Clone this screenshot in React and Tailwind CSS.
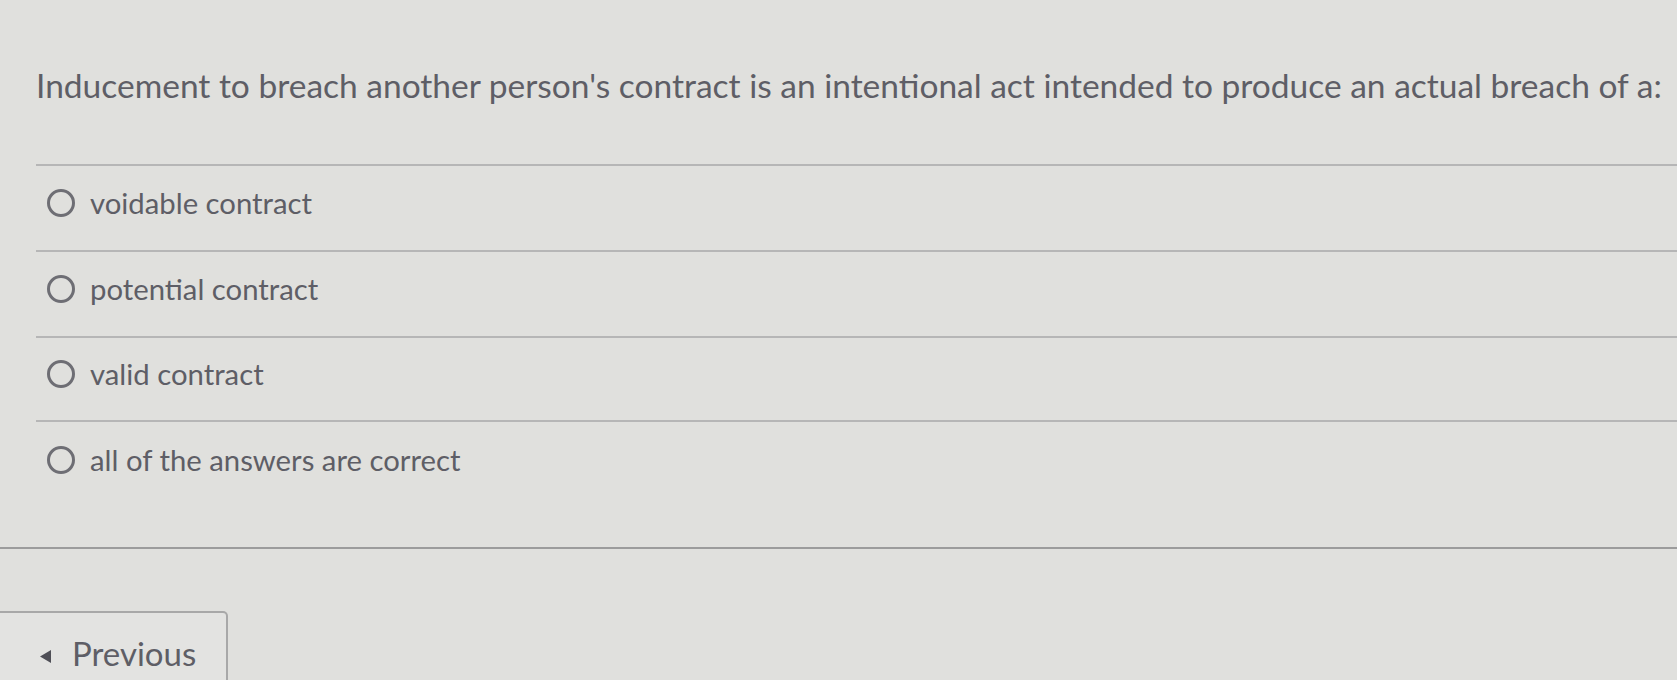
export default function App() {
  const options = [
    'voidable contract',
    'potential contract',
    'valid contract',
    'all of the answers are correct',
  ];

  return (
    <div className="w-[1677px] h-[680px] overflow-hidden bg-[#e0e0dd] text-[#5e5e66] font-['Lato','Open_Sans',sans-serif]">
      <div className="pl-[36px]">
        <p className="pt-[67px] h-[164px] text-[33.5px] leading-[36px] whitespace-nowrap">
          Inducement to breach another person's contract is an intentional act intended to produce an actual breach of a:
        </p>
        {options.map((opt, i) => (
          <label
            key={opt}
            className={`flex items-center pb-[10px] border-t-2 border-[#b6b6b6] ${i === 3 ? 'h-[88px]' : i === 2 ? 'h-[84px]' : 'h-[86px]'}`}
          >
            <span className="ml-[11px] w-[28px] h-[28px] rounded-full border-[3px] border-[#6e6e74] shrink-0" />
            <span className="ml-[15px] text-[29.3px]">{opt}</span>
          </label>
        ))}
      </div>
      <div className="mt-[39px] border-t-2 border-[#9c9c9c]" />
      <div className="pt-[62px]">
        <button className="flex items-center w-[228px] h-[80px] pl-[40px] pt-[10px] border-2 border-l-0 border-[#a8a8a8] rounded-tr-[5px] bg-[#e3e3e1] text-[#5e5e66]">
          <svg width="11" height="13" viewBox="0 0 11 13" className="shrink-0">
            <path d="M11 0 L0 6.5 L11 13 Z" fill="#4f4f56" />
          </svg>
          <span className="ml-[21px] text-[33px] -mt-[4px]">Previous</span>
        </button>
      </div>
    </div>
  );
}
